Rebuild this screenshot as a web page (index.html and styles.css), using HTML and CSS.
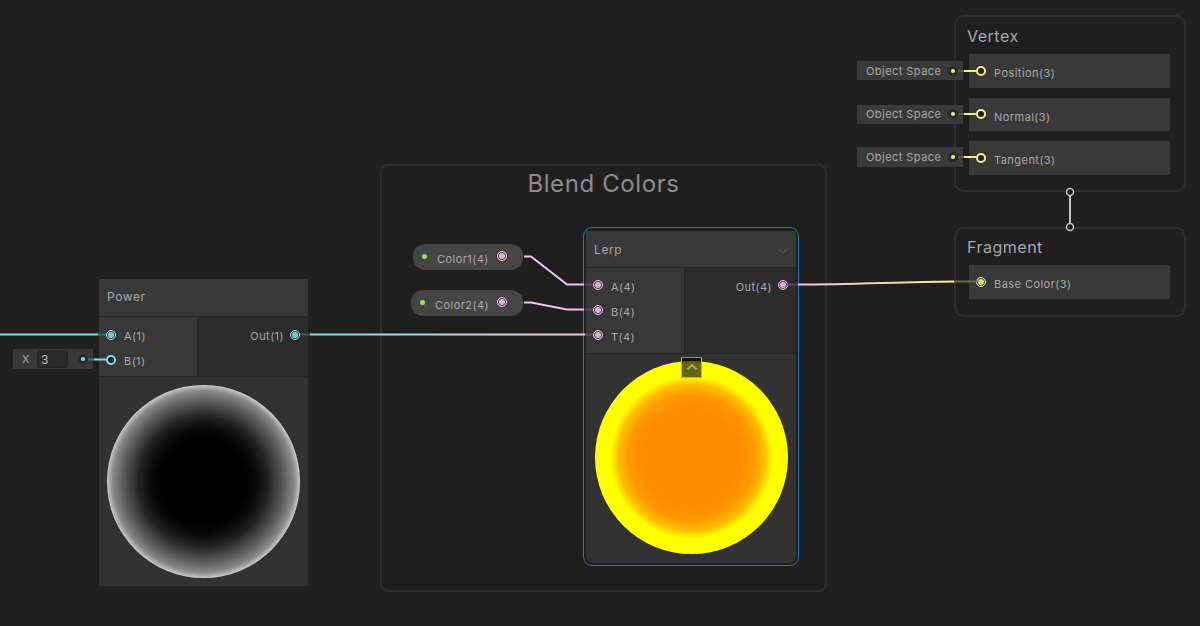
FILE: index.html
```html
<!DOCTYPE html>
<html lang="en">
<head>
<meta charset="utf-8">
<title>Shader Graph</title>
<link rel="stylesheet" href="styles.css">
</head>
<body>
<main class="canvas">
  <section class="group">
    <h2 class="group-title">Blend Colors</h2>
  </section>

  <section class="context vertex">
    <h3 class="context-title">Vertex</h3>
    <div class="blocks">
      <div class="block"><span class="port ring yellow"></span><span class="block-label">Position(3)</span></div>
      <div class="block"><span class="port ring yellow"></span><span class="block-label">Normal(3)</span></div>
      <div class="block"><span class="port ring yellow"></span><span class="block-label">Tangent(3)</span></div>
    </div>
  </section>

  <section class="context fragment">
    <h3 class="context-title">Fragment</h3>
    <div class="blocks">
      <div class="block"><span class="port full yellow"></span><span class="block-label">Base Color(3)</span></div>
    </div>
  </section>

  <div class="space-tag tag-1"><span>Object Space</span><i class="mini-dot yellow"></i></div>
  <div class="space-tag tag-2"><span>Object Space</span><i class="mini-dot yellow"></i></div>
  <div class="space-tag tag-3"><span>Object Space</span><i class="mini-dot yellow"></i></div>

  <div class="prop prop-1"><i class="prop-dot"></i><span class="prop-label">Color1(4)</span><span class="port full pink"></span></div>
  <div class="prop prop-2"><i class="prop-dot"></i><span class="prop-label">Color2(4)</span><span class="port full pink"></span></div>

  <article class="node lerp">
    <header class="node-head">
      <span>Lerp</span>
      <svg class="chevron" width="10" height="6" viewBox="0 0 10 6"><path d="M1 1l4 4 4-4" fill="none" stroke="#505050" stroke-width="1.2"/></svg>
    </header>
    <div class="node-ports">
      <div class="inputs">
        <div class="row"><span class="port full pink"></span><span>A(4)</span></div>
        <div class="row"><span class="port full pink"></span><span>B(4)</span></div>
        <div class="row"><span class="port full pink"></span><span>T(4)</span></div>
      </div>
      <div class="outputs">
        <div class="row out"><span>Out(4)</span><span class="port full pink"></span></div>
      </div>
    </div>
    <div class="preview"><div class="ball ball-lerp"></div></div>
    <div class="collapse"><svg width="12" height="8" viewBox="0 0 12 8"><path d="M1.500 6.500L6 2l4.500 4.500" fill="none" stroke="#a8a878" stroke-width="2"/></svg></div>
  </article>

  <article class="node power">
    <header class="node-head"><span>Power</span></header>
    <div class="node-ports">
      <div class="inputs">
        <div class="row"><span class="port full cyan"></span><span>A(1)</span></div>
        <div class="row"><span class="port ring cyan"></span><span>B(1)</span></div>
      </div>
      <div class="outputs">
        <div class="row out"><span>Out(1)</span><span class="port full cyan"></span></div>
      </div>
    </div>
    <div class="preview"><div class="ball ball-power"></div></div>
  </article>

  <div class="x-tag"><span class="x-label">X</span><span class="x-field">3</span><i class="mini-dot cyan"></i></div>

  <svg class="wires" width="1200" height="626" viewBox="0 0 1200 626" fill="none">
    <defs>
      <linearGradient id="cp" gradientUnits="userSpaceOnUse" x1="310" y1="0" x2="585" y2="0">
        <stop offset="0" stop-color="#7fe3e6"/><stop offset="1" stop-color="#f5c0ee"/>
      </linearGradient>
      <linearGradient id="py" gradientUnits="userSpaceOnUse" x1="798" y1="0" x2="954" y2="0">
        <stop offset="0" stop-color="#f5c0ee"/><stop offset="1" stop-color="#eef08a"/>
      </linearGradient>
    </defs>
    <path d="M0 334.500H98" stroke="#7fe3e6" stroke-width="2"/>
    <path d="M98 334.500H106" stroke="#4a6a6c" stroke-width="2"/>
    <path d="M88 359.500H95" stroke="#4a6a6c" stroke-width="2"/>
    <path d="M94 359.500H106" stroke="#7fe3e6" stroke-width="2"/>
    <path d="M310 334.500H585" stroke="url(#cp)" stroke-width="2"/>
    <path d="M300 334.500H310" stroke="#3f5a5c" stroke-width="2"/>
    <path d="M524 256.500H531L567 284.500H584" stroke="#f5c0ee" stroke-width="2"/>
    <path d="M524 302.500H531L567 309.500H584" stroke="#f5c0ee" stroke-width="2"/>
    <path d="M585 284.500H593M585 309.500H593M585 334.500H593" stroke="#5c4a58" stroke-width="2"/>
    <path d="M787 284.500H798" stroke="#5c4a58" stroke-width="2"/>
    <path d="M798 284.500C850 284.500 900 282 954 281.500" stroke="url(#py)" stroke-width="2"/>
    <path d="M954 281.500H977" stroke="#6b6b3e" stroke-width="2"/>
    <path d="M958 71H965M958 114H965M958 157H965" stroke="#5a5a3c" stroke-width="2"/>
    <path d="M964 71H976M964 114H976M964 157H976" stroke="#eef08a" stroke-width="2"/>
    <path d="M1070 195V223" stroke="#c4c4c4" stroke-width="2"/>
    <circle cx="1070" cy="192" r="3.500" fill="#1f1f1f" stroke="#c4c4c4" stroke-width="1.500"/>
    <circle cx="1070" cy="227" r="3.500" fill="#1f1f1f" stroke="#c4c4c4" stroke-width="1.500"/>
  </svg>
</main>
</body>
</html>
```
FILE: styles.css
```css
* { box-sizing: border-box; }
html, body { margin: 0; height: 100%; }
body { background: #202020; overflow: hidden; }

.canvas {
  position: relative;
  width: 1200px;
  height: 626px;
  overflow: hidden;
  font-family: Inter, "Liberation Sans", sans-serif;
  font-size: 11px;
  color: #a8a8a8;
  letter-spacing: 0.45px;
}

.group {
  position: absolute;
  left: 380px;
  top: 164px;
  width: 447px;
  height: 428px;
  border: 2px solid #2e2e2e;
  border-radius: 8px;
  background: #1f1f1f;
}
.group-title {
  margin: 2px 0 0;
  text-align: center;
  font-size: 24px;
  line-height: 32px;
  font-weight: 400;
  color: #8c8c8c;
  letter-spacing: 0.6px;
}

.context {
  position: absolute;
  left: 954px;
  width: 232px;
  padding: 0 14px 0 13px;
  background: #1f1f1f;
  border: 2px solid #2f2f2f;
  border-radius: 10px;
}
.vertex { top: 15px; height: 177px; }
.fragment { top: 227px; height: 90px; }
.context-title {
  margin: 0 0 0 -2px;
  height: 37px;
  padding: 8px 0 0;
  font-size: 16px;
  line-height: 22px;
  font-weight: 400;
  color: #a8a8a8;
  letter-spacing: 0.5px;
}
.fragment .context-title { height: 36px; padding-top: 7px; }
.blocks { display: flex; flex-direction: column; gap: 10px; }
.block {
  display: flex;
  align-items: center;
  height: 33.500px;
  padding-left: 7px;
  background: #393939;
}
.block-label { margin-left: 8px; padding-top: 5px; }

.port {
  display: block;
  flex: none;
  width: 10px;
  height: 10px;
  border-radius: 50%;
}
.port.ring { background: #202020; border: 2px solid; }
.port.full { border: 1.500px solid; background: #4a4a4a; position: relative; }
.port.full::after {
  content: "";
  position: absolute;
  inset: 1px;
  border-radius: 50%;
  background: currentColor;
  opacity: 0.85;
}
.yellow { color: #eef08a; }
.pink { color: #f5c0ee; }
.cyan { color: #7fe3e6; }

.mini-dot {
  width: 4px;
  height: 4px;
  border-radius: 50%;
  background: currentColor;
  box-shadow: 0 0 0 3px #2a2a2a;
}

.space-tag {
  position: absolute;
  left: 857px;
  width: 106px;
  height: 19px;
  padding: 0 8px 0 9px;
  display: flex;
  align-items: center;
  justify-content: space-between;
  background: #3a3a3a;
}
.tag-1 { top: 61px; }
.tag-2 { top: 104.500px; }
.tag-3 { top: 147px; height: 20px; }

.prop {
  position: absolute;
  height: 26.500px;
  display: flex;
  align-items: center;
  background: #464646;
  border-radius: 12px;
}
.prop-1 { left: 413px; top: 243.500px; width: 110px; padding-left: 9px; }
.prop-2 { left: 411px; top: 289.500px; width: 112px; padding-left: 9px; }
.prop-dot { width: 5px; height: 5px; margin-top: -1px; border-radius: 50%; background: #8fe36a; }
.prop-label { margin: 4px 8px 0 10px; }
.prop .port { margin-top: -1px; }

.node { position: absolute; background: #2c2c2c; }
.node-head {
  height: 37px;
  padding: 0 8px 2px 8px;
  display: flex;
  align-items: center;
  justify-content: space-between;
  background: #383838;
  font-size: 12px;
  letter-spacing: 0.6px;
  border-bottom: 1px solid #262626;
}
.node-ports { display: flex; border-bottom: 1px solid #262626; }
.inputs { background: #383838; padding: 5px 0 4px; }
.outputs { flex: 1; background: #2c2c2c; padding-top: 5px; }
.row { display: flex; align-items: center; height: 25px; gap: 8px; padding-left: 7px; }
.row > span:not(.port) { padding-top: 3px; }
.row.out { justify-content: flex-end; gap: 6px; padding: 0 8px 0 0; }
.preview { display: flex; align-items: center; justify-content: center; background: #323232; }
.ball { width: 193px; height: 193px; border-radius: 50%; }
.ball-power {
  background: radial-gradient(circle closest-side, #000 0, #000 45%, #0a0a0a 55%, #222 67%, #5e5e5e 84%, #888 94%, #b8b8b8 98.500%, #d0d0d0 100%);
}
.ball-lerp {
  background: radial-gradient(circle closest-side, #ff8c00 0, #ff8c00 50%, #ff9800 65%, #ffc000 76%, #ffff00 84%, #ffff00 100%);
}

.power { left: 99px; top: 279px; width: 209px; height: 307px; }
.power .inputs { width: 99px; border-right: 1px solid #262626; height: 59px; }
.power .preview { height: 209px; }
.power .node-head { height: 38px; }

.lerp {
  left: 583px;
  top: 226.500px;
  width: 216px;
  height: 339px;
  padding: 3px 2px;
  border: 1px solid #2c7aa5;
  border-radius: 9px;
  background: #1f1f1f;
}
.lerp .node-head { padding-top: 2px; padding-bottom: 0; }
.lerp .inputs { width: 99px; border-right: 1px solid #262626; height: 85px; }
.lerp .preview { height: 209px; padding-bottom: 2px; border-radius: 0 0 7px 7px; }
.chevron { margin-top: 3px; }

.collapse {
  position: absolute;
  left: 97px;
  top: 129px;
  width: 21px;
  height: 21px;
  display: flex;
  align-items: center;
  justify-content: center;
  background: rgba(0, 0, 0, 0.6);
  border: 1px solid #aaa;
  border-top-color: #8a8a8a;
}

.x-tag {
  position: absolute;
  left: 13px;
  top: 349px;
  width: 80px;
  height: 20px;
  display: flex;
  align-items: center;
  padding-left: 9px;
  background: #393939;
}
.x-label { width: 15px; }
.x-field {
  width: 31px;
  height: 18px;
  padding-left: 3px;
  line-height: 17px;
  font-size: 12px;
  color: #bcbcbc;
  background: #2a2a2a;
  border: 1px solid #242424;
  border-radius: 3px;
}
.x-tag .mini-dot { margin-left: 13px; }

.wires { position: absolute; left: 0; top: 0; pointer-events: none; }
```
